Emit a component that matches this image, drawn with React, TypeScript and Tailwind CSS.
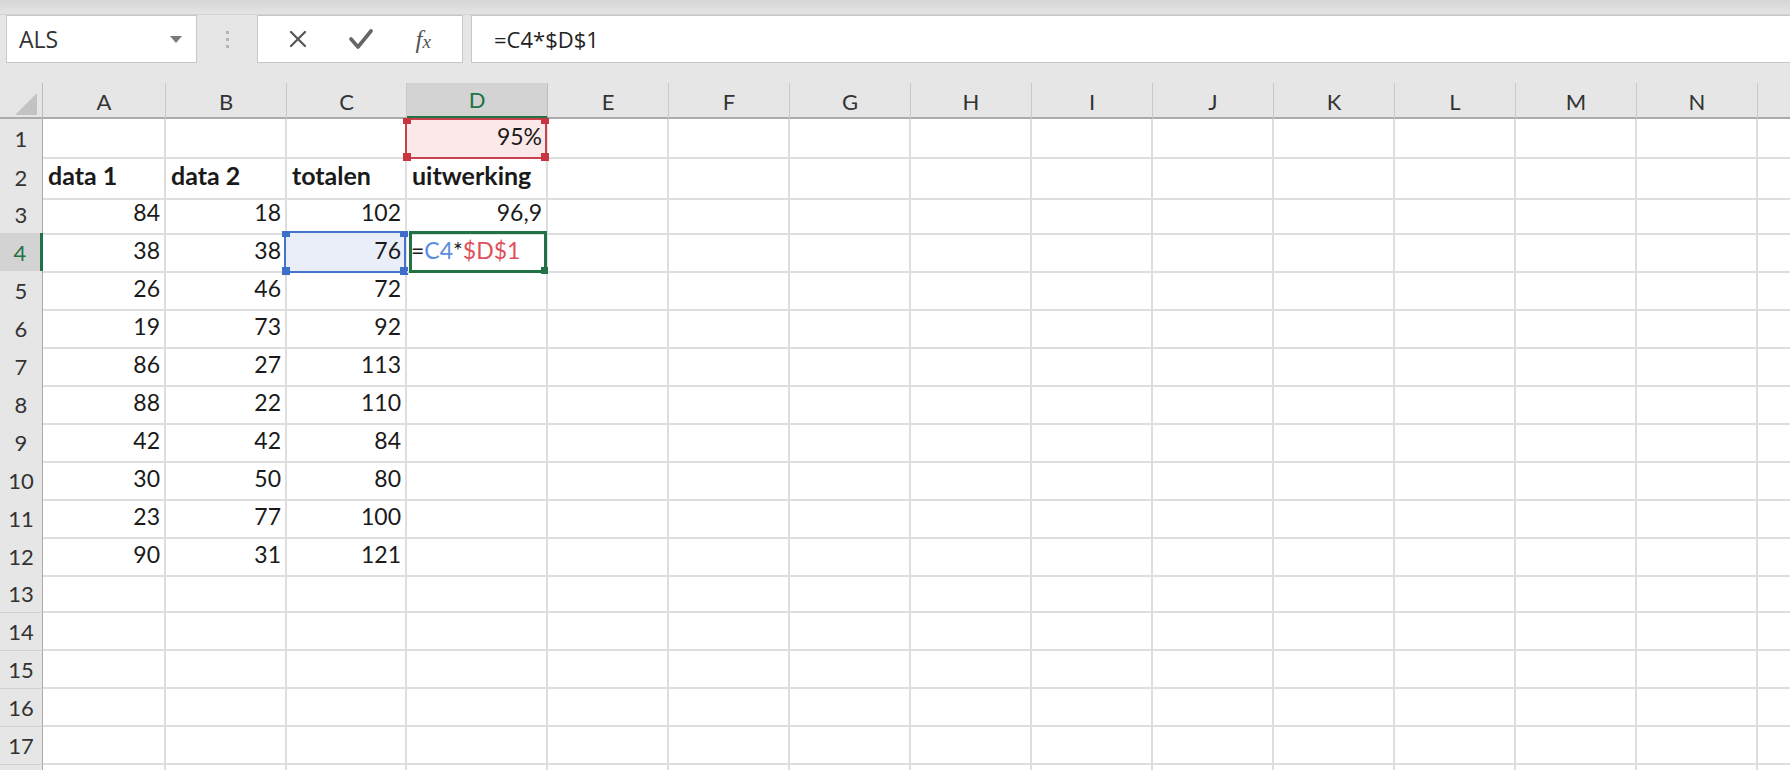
import React from 'react';

const cols = ['A', 'B', 'C', 'D', 'E', 'F', 'G', 'H', 'I', 'J', 'K', 'L', 'M', 'N', 'O'];

const rows: string[][] = [
  ['', '', '', '95%'],
  ['data 1', 'data 2', 'totalen', 'uitwerking'],
  ['84', '18', '102', '96,9'],
  ['38', '38', '76', ''],
  ['26', '46', '72'],
  ['19', '73', '92'],
  ['86', '27', '113'],
  ['88', '22', '110'],
  ['42', '42', '84'],
  ['30', '50', '80'],
  ['23', '77', '100'],
  ['90', '31', '121'],
  [], [], [], [], [], [],
];

const gridCols = 'grid grid-cols-[43px_123px_121px_120px_141px_repeat(11,121px)]';

function Corners({ color, handleOnly }: { color: string; handleOnly?: boolean }) {
  if (handleOnly) {
    return <span className={`absolute -right-[4px] -bottom-[4px] h-[7px] w-[7px] ${color}`} />;
  }
  return (
    <>
      <span className={`absolute -left-[4px] -top-[2px] h-[6px] w-[8px] ${color}`} />
      <span className={`absolute -right-[4px] -top-[2px] h-[6px] w-[8px] ${color}`} />
      <span className={`absolute -left-[4px] -bottom-[4px] h-[8px] w-[8px] ${color}`} />
      <span className={`absolute -right-[4px] -bottom-[4px] h-[8px] w-[8px] ${color}`} />
    </>
  );
}

function FormulaBar() {
  return (
    <div className="bg-[#e6e6e6]">
      <div className="h-[15px] bg-gradient-to-b from-[#d6d6d6] to-[#e4e4e4] border-b border-[#d2d2d2]" />
      <div className="flex h-[48px] items-stretch pl-[6px]">
        <div className="flex w-[191px] items-center justify-between border border-[#c8c8c8] bg-white pl-[12px] pr-[14px]">
          <span className="text-[23px] text-[#333] font-['Open_Sans',sans-serif]">ALS</span>
          <svg width="12" height="7" viewBox="0 0 12 7">
            <path d="M0 0h12L6 7z" fill="#7a7a7a" />
          </svg>
        </div>
        <div className="flex w-[60px] flex-col items-center justify-center gap-[4px]">
          <span className="h-[3px] w-[3px] bg-[#b5b5b5]" />
          <span className="h-[3px] w-[3px] bg-[#b5b5b5]" />
          <span className="h-[3px] w-[3px] bg-[#b5b5b5]" />
        </div>
        <div className="flex w-[206px] items-center justify-around border border-[#c8c8c8] bg-white px-[10px]">
          <svg width="18" height="18" viewBox="0 0 18 18">
            <path d="M2 2l14 14M16 2L2 16" stroke="#555" strokeWidth="2.2" strokeLinecap="round" />
          </svg>
          <svg width="24" height="20" viewBox="0 0 24 20">
            <path d="M2 10l7 8L22 2" stroke="#666" strokeWidth="3.6" fill="none" strokeLinejoin="round" strokeLinecap="round" />
          </svg>
          <span className="font-['Liberation_Serif',serif] italic text-[25px] text-[#555] leading-none">
            f<span className="text-[19px]">x</span>
          </span>
        </div>
        <div className="ml-[8px] flex flex-1 items-center border border-r-0 border-[#c8c8c8] bg-white pl-[22px]">
          <span className="text-[22px] text-[#222] font-['Open_Sans',sans-serif]">=C4*$D$1</span>
        </div>
      </div>
      <div className="h-[20px]" />
    </div>
  );
}

function HeaderRow() {
  return (
    <div className={`${gridCols} h-[36px] bg-[#e6e6e6] border-b-2 border-[#ababab]`}>
      <div className="flex items-end justify-end border-r border-[#bdbdbd] pr-[5px] pb-[4px]">
        <svg width="22" height="22" viewBox="0 0 22 22">
          <path d="M22 0V22H0z" fill="#c3c3c3" />
        </svg>
      </div>
      {cols.map((c) =>
        c === 'D' ? (
          <div
            key={c}
            className="flex items-center justify-center bg-[#d3d3d3] border-r border-[#bdbdbd] border-b-[3px] border-b-[#217346] text-[#217346] text-[22px]"
          >
            {c}
          </div>
        ) : (
          <div key={c} className="flex items-center justify-center border-r border-[#c9c9c9] text-[22px] text-[#333]">
            {c === 'O' ? '' : c}
          </div>
        ),
      )}
    </div>
  );
}

function Cell({ r, ci, value }: { r: number; ci: number; value: string }) {
  const bold = r === 2;
  const base = 'relative flex items-end border-r-2 border-b-2 border-[#dedede] pb-[3px] text-[#1a1a1a]';
  const size = bold ? 'text-[25px]' : 'text-[23px]';
  const align = bold ? 'justify-start pl-[5px]' : 'justify-end pr-[4px]';

  if (r === 1 && ci === 3) {
    return (
      <div className={`${base} ${size} ${align} z-10`}>
        <div className="absolute -left-[2px] -top-[1px] -right-[1px] -bottom-[2px] border-2 border-[#c8404c] bg-[#fbe9e9]">
          <Corners color="bg-[#c8343f]" />
        </div>
        <span className="relative">{value}</span>
      </div>
    );
  }
  if (r === 4 && ci === 2) {
    return (
      <div className={`${base} ${size} ${align} z-10`}>
        <div className="absolute -left-[3px] -top-[2px] -right-[1px] -bottom-[2px] border-2 border-[#4474cc] bg-[#e9eef8]">
          <Corners color="bg-[#3e6fc8]" />
        </div>
        <span className="relative">{value}</span>
      </div>
    );
  }
  if (r === 4 && ci === 3) {
    return (
      <div className={`${base} ${size} justify-start pl-[4px] z-10`}>
        <div className="absolute left-[2px] -top-[2px] -right-[1px] -bottom-[2px] border-[3px] border-[#217346]">
          <Corners color="bg-[#217346]" handleOnly />
        </div>
        <span className="relative">
          =<span className="text-[#5b8de0]">C4</span>*<span className="text-[#e0505a]">$D$1</span>
        </span>
      </div>
    );
  }
  return (
    <div className={`${base} ${size} ${align} ${bold ? 'font-bold' : ''}`}>
      {value}
    </div>
  );
}

function Row({ r, values }: { r: number; values: string[] }) {
  const active = r === 4;
  return (
    <div className={`${gridCols} h-[38px]`}>
      <div
        className={
          active
            ? 'flex items-center justify-center bg-[#d3d3d3] border-r-[3px] border-r-[#217346] border-b border-[#c8c8c8] text-[22px] text-[#217346]'
            : 'flex items-center justify-center bg-[#e6e6e6] border-r border-r-[#ababab] border-b border-[#d0d0d0] text-[22px] text-[#333]'
        }
      >
        {r < 18 ? r : ''}
      </div>
      {cols.map((c, ci) => (
        <Cell key={c} r={r} ci={ci} value={values[ci] ?? ''} />
      ))}
    </div>
  );
}

export default function App() {
  return (
    <div className="h-[770px] w-[1790px] overflow-hidden bg-white font-['Lato',sans-serif]">
      <FormulaBar />
      <HeaderRow />
      {rows.map((values, i) => (
        <Row key={i} r={i + 1} values={values} />
      ))}
    </div>
  );
}
